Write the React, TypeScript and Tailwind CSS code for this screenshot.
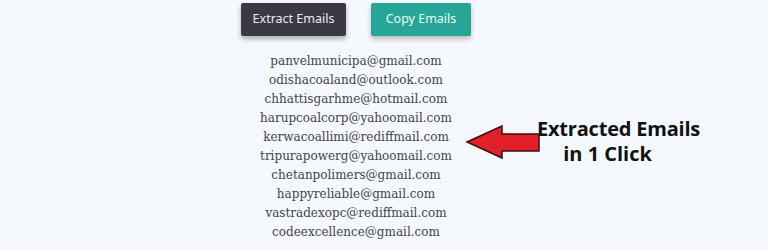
const emails = [
  "panvelmunicipa@gmail.com",
  "odishacoaland@outlook.com",
  "chhattisgarhme@hotmail.com",
  "harupcoalcorp@yahoomail.com",
  "kerwacoallimi@rediffmail.com",
  "tripurapowerg@yahoomail.com",
  "chetanpolimers@gmail.com",
  "happyreliable@gmail.com",
  "vastradexopc@rediffmail.com",
  "codeexcellence@gmail.com",
]

function LeftArrow() {
  return (
    <svg width="76" height="38" viewBox="0 0 76 38">
      <path
        d="M2 18 L37 2 L37 10 L74 10 L74 27 L37 27 L37 34 Z"
        fill="#e1202a"
        stroke="#3a1010"
        strokeWidth="1.5"
        strokeLinejoin="miter"
      />
    </svg>
  )
}

export default function App() {
  return (
    <div className="w-[768px] h-[249px] bg-[#f5f8fc] overflow-hidden flex">
      <div className="ml-[241px] w-[230px] flex flex-col items-center pt-[3px]">
        <div className="flex gap-[25px] font-['Noto_Sans',sans-serif] text-[12.5px]">
          <button className="w-[105px] h-[33px] bg-[#3b3a44] text-[#eceaf2] rounded-[2px] shadow-[0_3px_5px_rgba(0,0,0,0.3)]">
            Extract Emails
          </button>
          <button className="w-[100px] h-[33px] bg-[#27a597] text-[#e9fbf7] rounded-[2px] shadow-[0_3px_5px_rgba(0,0,0,0.25)]">
            Copy Emails
          </button>
        </div>
        <ul className="mt-[16px] flex flex-col items-center font-['DejaVu_Serif',serif] text-[12px] leading-[19px] text-[#444448]">
          {emails.map((e) => (
            <li key={e}>{e}</li>
          ))}
        </ul>
      </div>
      <div className="flex items-start mt-[116px] ml-[-6px]">
        <div className="mt-[8px]">
          <LeftArrow />
        </div>
        <div className="-ml-[4px] flex flex-col items-center font-['Open_Sans',sans-serif] font-bold text-[20px] leading-[25px] text-[#111]">
          <span className="tracking-[-0.2px]">Extracted Emails</span>
          <span className="-ml-[22px]">in 1 Click</span>
        </div>
      </div>
    </div>
  )
}
